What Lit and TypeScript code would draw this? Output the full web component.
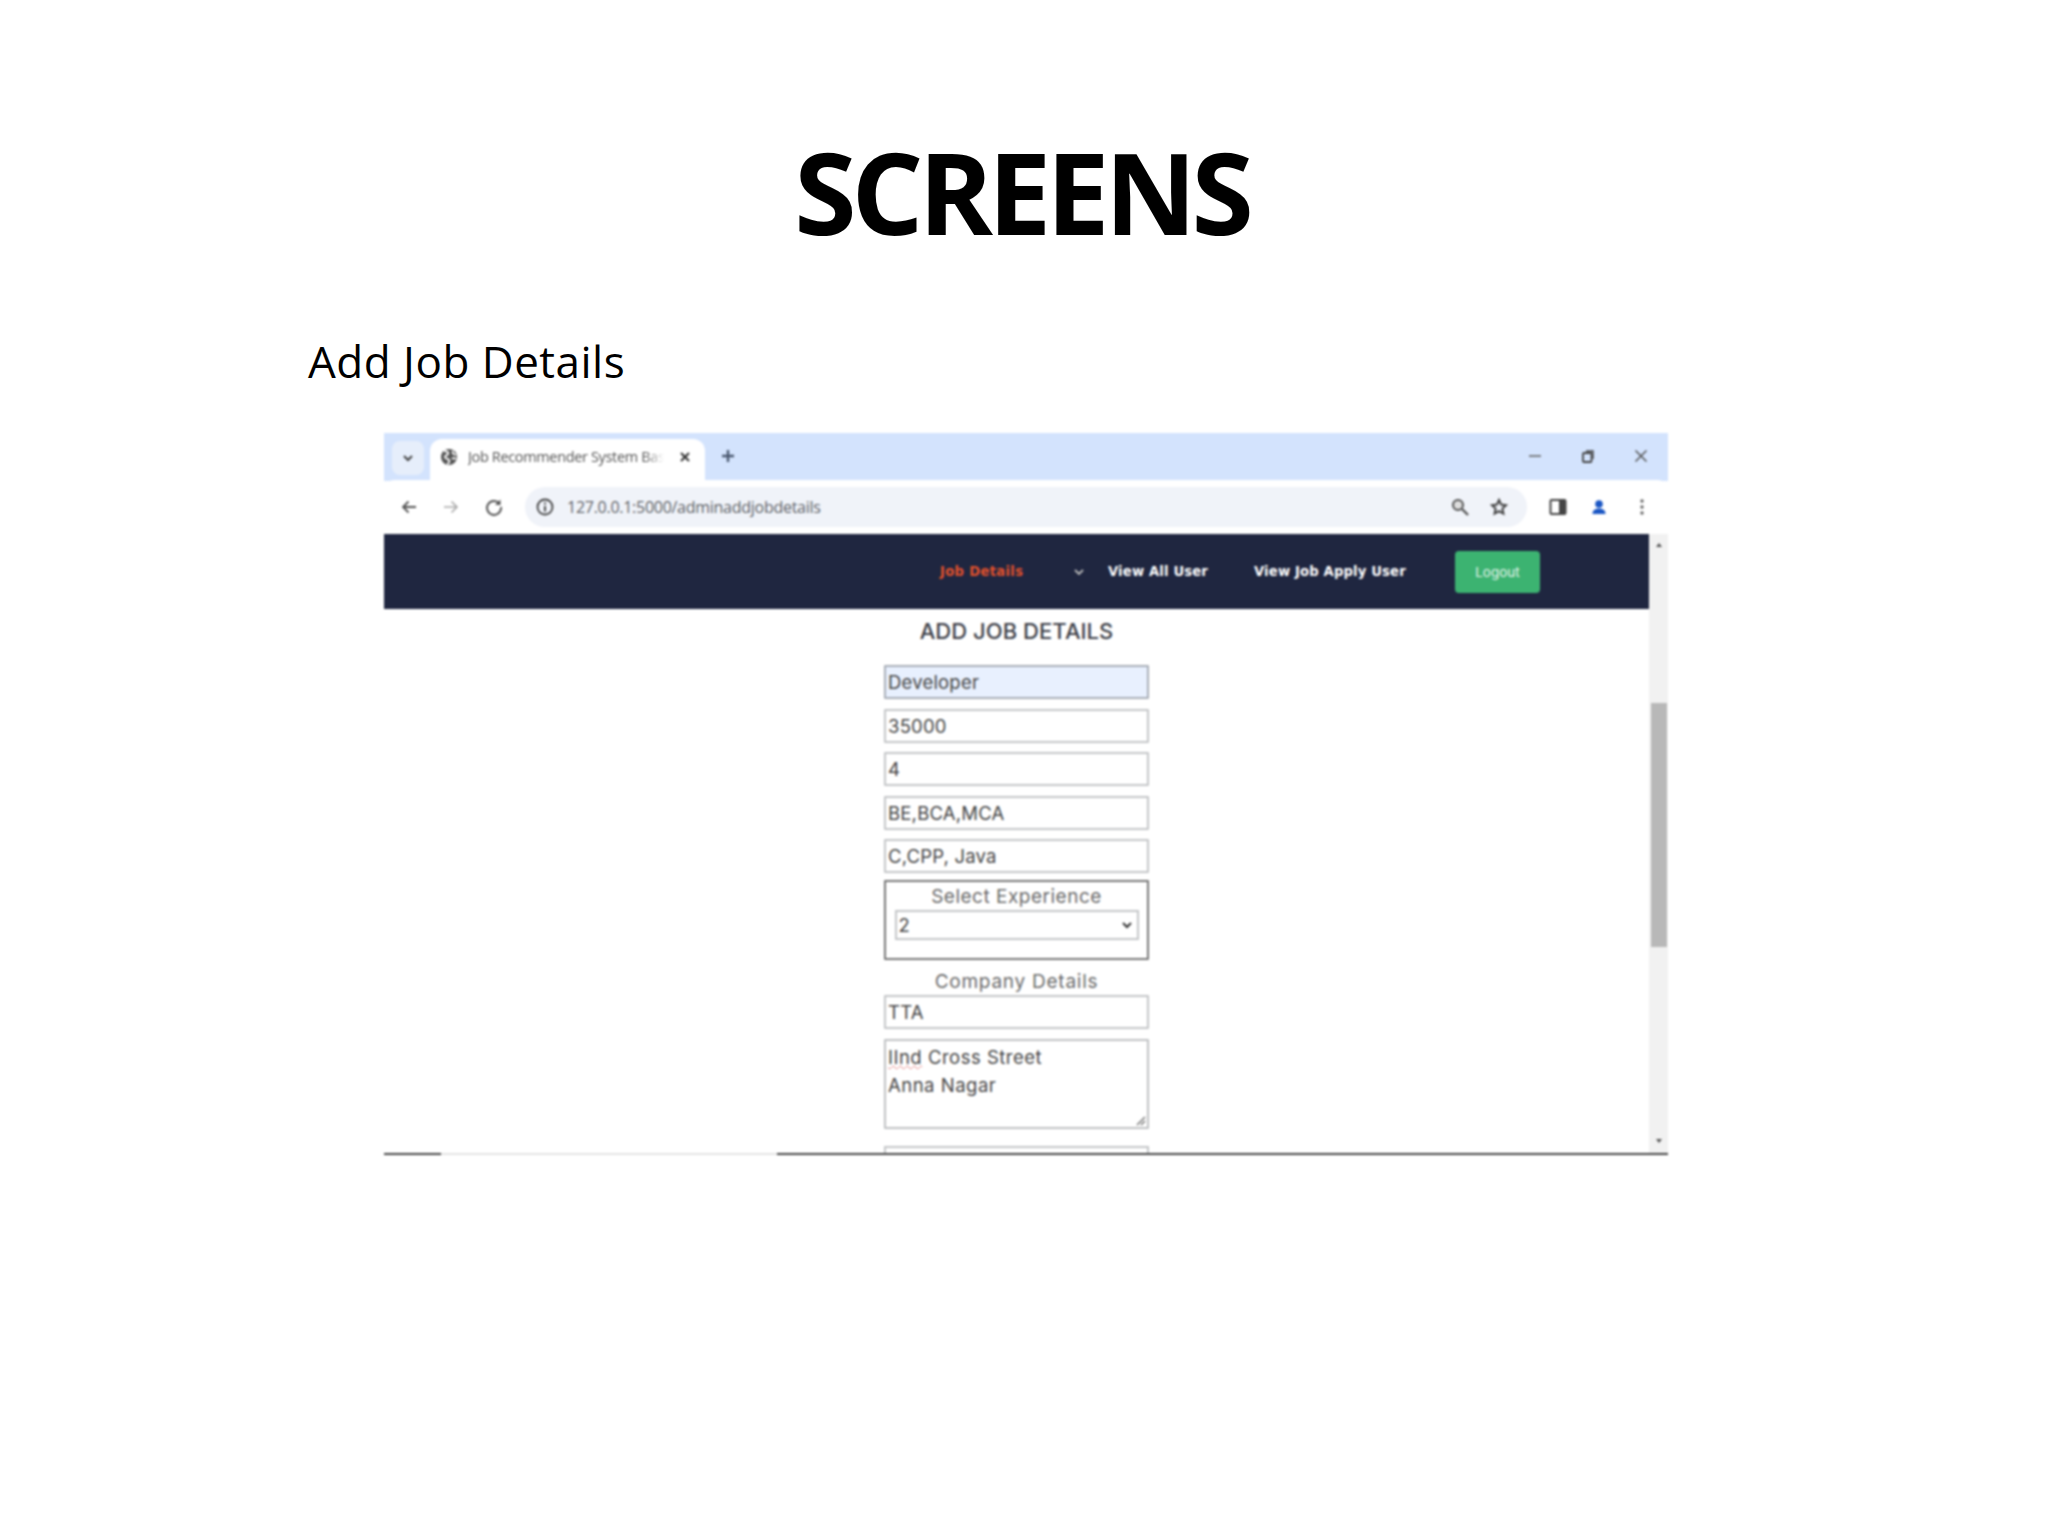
import { LitElement, html, css } from "lit";
import { customElement } from "lit/decorators.js";

@customElement("app-root")
export class AppRoot extends LitElement {
  static styles = css`
    :host { display: block; width: 2048px; height: 1536px; background: #fff; overflow: hidden; font-family: "Open Sans", sans-serif; color: #000; }
    .slide { display: flex; flex-direction: column; height: 100%; }
    h1 { margin: 127px 0 0; padding-right: 5px; height: 128px; text-align: center; font: 700 113px/128px "Open Sans", sans-serif; letter-spacing: -5px; }
    h2 { margin: 79px 0 0 308px; font: 400 44px/54px "Open Sans", sans-serif; letter-spacing: 0.5px; }
    .shot { margin: 45px 0 0 384px; width: 1284px; height: 722px; display: flex; flex-direction: column; filter: blur(0.8px); overflow: hidden; }

    .tabs { height: 48px; flex: none; background: #d3e3fd; display: flex; align-items: flex-end; padding-left: 8px; }
    .tabchev { width: 32px; height: 34px; border-radius: 8px; background: #e6eefb; margin: 0 6px 6px 0; display: flex; align-items: center; justify-content: center; }
    .tab { width: 275px; height: 42px; background: #fff; border-radius: 12px 12px 0 0; display: flex; align-items: center; padding: 0 0 7px 10px; box-sizing: border-box; }
    .tabtext { font: 400 14.5px "Open Sans", sans-serif; color: #555; margin-left: 10px; width: 196px; white-space: nowrap; letter-spacing: -0.35px; -webkit-mask-image: linear-gradient(90deg, #000 90%, transparent); }
    .tabx { margin-left: 15px; display: flex; }
    .plus { margin: 0 0 18px 16px; display: flex; }
    .winctl { margin-left: auto; display: flex; gap: 39px; padding: 0 20px 18px 0; }

    .toolbar { height: 54px; flex: none; background: #fff; display: flex; align-items: center; padding-left: 16px; border-radius: 10px 10px 0 0; margin-top: -1px; }
    .ticon { display: flex; width: 18px; height: 18px; align-items: center; justify-content: center; flex: none; }
    .back { margin-right: 24px; }
    .fwd { margin-right: 25px; }
    .pill { margin-left: 22px; width: 1002px; height: 40px; border-radius: 20px; background: #f0f3f9; display: flex; align-items: center; box-sizing: border-box; padding-left: 11px; flex: none; }
    .url { margin-left: 13px; font: 400 16px "Open Sans", sans-serif; color: #5f6368; letter-spacing: -0.27px; }
    .pill .zoom { margin-left: auto; }
    .pill .star { margin: 0 19px 0 21px; }
    .tool-right { display: flex; align-items: center; margin-left: 22px; gap: 23px; }
    .dots { margin-left: 2px; }

    .view { flex: 1; min-height: 0; display: flex; overflow: hidden; }
    .page { width: 1265px; flex: none; background: #fff; overflow: hidden; }
    nav { height: 75px; background: #1f2640; display: flex; align-items: center; padding-left: 556px; box-sizing: border-box; font: 700 13.2px "DejaVu Sans", sans-serif; color: #fff; white-space: nowrap; letter-spacing: 0.15px; }
    .active { color: #e2512c; width: 134px; letter-spacing: 0.3px; }
    .navchev { width: 34px; display: flex; }
    .all { width: 146px; }
    .apply { width: 201px; }
    .logout { width: 85px; height: 42px; background: #3cb371; border-radius: 4px; display: flex; align-items: center; justify-content: center; font: 400 13.5px Inter, sans-serif; color: #e8f5ee; letter-spacing: 0; }

    form { width: 265px; margin: 0 auto; display: flex; flex-direction: column; gap: 9.4px; font: 400 18.5px Inter, sans-serif; color: #454545; letter-spacing: 0.2px; }
    .title { text-align: center; font: 500 22px/32px Inter, sans-serif; color: #3d3f48; margin: 6px 0 9px; letter-spacing: 0.05px; white-space: nowrap; }
    .field { height: 34px; border: 2px solid #c4c6c8; box-sizing: border-box; padding-left: 2px; display: flex; align-items: center; border-radius: 1px; }
    .filled { background: #e8f0fe; border-color: #a9afb8; }
    fieldset { margin: -2px 0 0; padding: 0; height: 80px; border: 2px solid #777; box-sizing: border-box; display: flex; flex-direction: column; align-items: center; border-radius: 1px; }
    .label { text-align: center; color: #6a6a6a; line-height: 24px; font-size: 19px; letter-spacing: 0.5px; }
    fieldset .label { margin-top: 3px; }
    .company { letter-spacing: 0.75px; margin: 0 0 -8px; }
    .select { width: 244px; height: 30px; border: 2px solid #c4c6c8; box-sizing: border-box; display: flex; align-items: center; justify-content: space-between; padding: 0 5px 0 2px; margin-top: 1px; }
    .area { height: 90px; border: 2px solid #bfc1c3; box-sizing: border-box; padding: 2px 2px; line-height: 28.5px; position: relative; border-radius: 1px; letter-spacing: 0.5px; }
    .spell { text-decoration: underline wavy #e58a8a 1px; }
    .grip { position: absolute; right: 1px; bottom: 1px; display: flex; }
    .next { height: 30px; border: 2px solid #c4c6c8; box-sizing: border-box; margin-top: 8px; flex: none; }

    .scroll { width: 19px; flex: none; background: #f1f1f1; display: flex; flex-direction: column; align-items: center; padding: 9px 0 10px; box-sizing: border-box; }
    .thumb { width: 16px; height: 244px; background: #b8b8b8; margin: 156px 0 auto; }
    .tri-up { width: 0; height: 0; border: 3.5px solid transparent; border-top: 0; border-bottom: 4px solid #555; }
    .tri-down { width: 0; height: 0; border: 3.5px solid transparent; border-bottom: 0; border-top: 4px solid #555; }

    .edge { height: 2px; flex: none; display: flex; }
    .edge i { background: #444; display: block; }
    .edge .a { width: 57px; }
    .edge .b { width: 336px; background: #e4e4e4; }
    .edge .c { flex: 1; }
  `;

  render() {
    const s = "none";
    return html`
      <div class="slide">
        <h1>SCREENS</h1>
        <h2>Add Job Details</h2>
        <div class="shot">
          <div class="tabs">
            <div class="tabchev">
              <svg width="12" height="12" viewBox="0 0 12 12"><path d="M2 4l4 4 4-4" fill=${s} stroke="#444" stroke-width="2"/></svg>
            </div>
            <div class="tab">
              <svg width="18" height="18" viewBox="0 0 18 18"><circle cx="9" cy="9" r="8" fill="#555"/><path d="M4 3c3 0 5 1 4 3S5 7 5 9s3 1 4 3-1 4-2 4M13 3c-1 2 0 3 3 4M12 11c1-1 3-1 4 0" fill="none" stroke="#fff" stroke-width="1.8"/></svg>
              <span class="tabtext">Job Recommender System Bas</span>
              <span class="tabx"><svg width="12" height="12" viewBox="0 0 12 12"><path d="M2 2l8 8M10 2l-8 8" stroke="#333" stroke-width="2"/></svg></span>
            </div>
            <span class="plus"><svg width="14" height="14" viewBox="0 0 14 14"><path d="M7 1v12M1 7h12" stroke="#49576f" stroke-width="2.4"/></svg></span>
            <div class="winctl">
              <svg width="14" height="14" viewBox="0 0 14 14"><path d="M1 7h12" stroke="#666" stroke-width="1.6"/></svg>
              <svg width="14" height="14" viewBox="0 0 14 14"><rect x="2" y="4" width="8.5" height="9" rx="1" fill="none" stroke="#444" stroke-width="1.8"/><path d="M5 2h7v8" fill="none" stroke="#444" stroke-width="1.4"/></svg>
              <svg width="14" height="14" viewBox="0 0 14 14"><path d="M1.5 1.5l11 11M12.5 1.5l-11 11" stroke="#555" stroke-width="1.5"/></svg>
            </div>
          </div>
          <div class="toolbar">
            <span class="ticon back"><svg width="16" height="16" viewBox="0 0 16 16"><path d="M15 8H2M7.5 2.5L2 8l5.5 5.5" fill="none" stroke="#555" stroke-width="1.8"/></svg></span>
            <span class="ticon fwd"><svg width="16" height="16" viewBox="0 0 16 16"><path d="M1 8h13M8.5 2.5L14 8l-5.5 5.5" fill="none" stroke="#aaa" stroke-width="1.6"/></svg></span>
            <span class="ticon"><svg width="18" height="18" viewBox="0 0 18 18"><path d="M14.5 5.5A7 7 0 1 0 16 9" fill="none" stroke="#555" stroke-width="2"/><path d="M15.5 1.5v5.5h-5.5z" fill="#555"/></svg></span>
            <div class="pill">
              <span class="ticon"><svg width="18" height="18" viewBox="0 0 18 18"><circle cx="9" cy="9" r="7.5" fill="none" stroke="#444" stroke-width="1.8"/><path d="M9 8v5.5M9 4.5v2" stroke="#444" stroke-width="1.9"/></svg></span>
              <span class="url">127.0.0.1:5000/adminaddjobdetails</span>
              <span class="ticon zoom"><svg width="18" height="18" viewBox="0 0 18 18"><circle cx="7" cy="7" r="5" fill="#ddd" stroke="#555" stroke-width="2"/><path d="M11 11l6 6" stroke="#555" stroke-width="2.4"/></svg></span>
              <span class="ticon star"><svg width="18" height="18" viewBox="0 0 18 18"><path d="M9 2l2.1 4.6 5 .6-3.7 3.4 1 5L9 13.1 4.6 15.6l1-5L1.900 7.200l5-.6z" fill="none" stroke="#444" stroke-width="2"/></svg></span>
            </div>
            <div class="tool-right">
              <span class="ticon"><svg width="18" height="18" viewBox="0 0 18 18"><rect x="1.500" y="2" width="15" height="14" rx="1" fill="#fff" stroke="#444" stroke-width="2"/><rect x="10" y="2" width="6" height="14" fill="#444"/></svg></span>
              <span class="ticon"><svg width="21" height="21" viewBox="0 0 18 18"><circle cx="9" cy="5.500" r="3.800" fill="#1a56c4"/><path d="M2.500 15.500c0-4 3-5.500 6.500-5.500s6.500 1.500 6.500 5.500z" fill="#1a56c4"/></svg></span>
              <span class="ticon dots"><svg width="6" height="18" viewBox="0 0 6 18"><circle cx="3" cy="3" r="1.700" fill="#666"/><circle cx="3" cy="9" r="1.700" fill="#666"/><circle cx="3" cy="15" r="1.700" fill="#666"/></svg></span>
            </div>
          </div>
          <div class="view">
            <div class="page">
              <nav>
                <span class="active">Job Details</span>
                <span class="navchev"><svg width="10" height="8" viewBox="0 0 10 8"><path d="M1 2l4 4 4-4" fill="none" stroke="#bbb" stroke-width="1.800"/></svg></span>
                <span class="all">View All User</span>
                <span class="apply">View Job Apply User</span>
                <span class="logout">Logout</span>
              </nav>
              <form>
                <div class="title">ADD JOB DETAILS</div>
                <div class="field filled">Developer</div>
                <div class="field">35000</div>
                <div class="field">4</div>
                <div class="field">BE,BCA,MCA</div>
                <div class="field">C,CPP, Java</div>
                <fieldset>
                  <div class="label">Select Experience</div>
                  <div class="select">2
                    <svg width="10" height="8" viewBox="0 0 10 8"><path d="M1 2l4 4 4-4" fill="none" stroke="#333" stroke-width="2"/></svg>
                  </div>
                </fieldset>
                <div class="label company">Company Details</div>
                <div class="field">TTA</div>
                <div class="area">
                  <span class="spell">IInd</span> Cross Street<br />Anna Nagar
                  <span class="grip"><svg width="12" height="12" viewBox="0 0 12 12"><path d="M11 3L3 11M11 7l-4 4" stroke="#777" stroke-width="1.500"/></svg></span>
                </div>
                <div class="next"></div>
              </form>
            </div>
            <div class="scroll">
              <span class="tri-up"></span>
              <div class="thumb"></div>
              <span class="tri-down"></span>
            </div>
          </div>
          <div class="edge"><i class="a"></i><i class="b"></i><i class="c"></i></div>
        </div>
      </div>
    `;
  }
}
